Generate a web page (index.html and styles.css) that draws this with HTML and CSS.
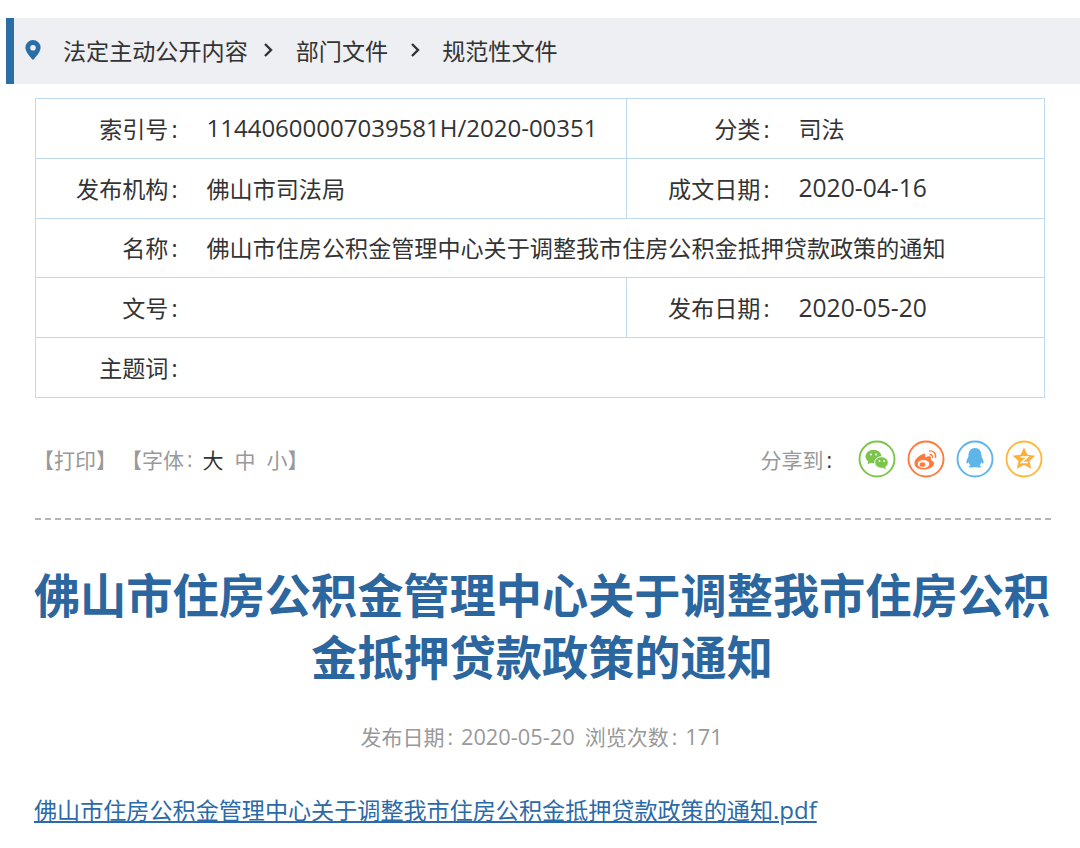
FILE: index.html
```html
<!DOCTYPE html>
<html lang="zh-CN">
<head>
<meta charset="utf-8">
<title>规范性文件</title>
<link rel="stylesheet" href="styles.css">
</head>
<body>
<nav class="crumb">
  <svg class="pin" viewBox="0 0 16 22" width="16" height="22"><path fill="#2b6ea6" fill-rule="evenodd" d="M8 1a7.6 7.6 0 0 0-7.6 7.6C.4 13 5 18 8 21c3-3 7.6-8 7.6-12.400A7.600 7.600 0 0 0 8 1zm0 5a2.800 2.800 0 1 1 0 5.600A2.800 2.800 0 0 1 8 6z"/></svg>
  <span class="crumb-a">法定主动公开内容</span>
  <svg class="chev chev-1" viewBox="0 0 10 16" width="10" height="16"><path d="M2 2l6 6-6 6" fill="none" stroke="#333" stroke-width="2.400"/></svg>
  <span class="crumb-b">部门文件</span>
  <svg class="chev chev-2" viewBox="0 0 10 16" width="10" height="16"><path d="M2 2l6 6-6 6" fill="none" stroke="#333" stroke-width="2.400"/></svg>
  <span class="crumb-c">规范性文件</span>
</nav>

<table class="meta">
  <colgroup><col class="c1"><col class="c2"><col class="c3"><col class="c4"></colgroup>
  <tr><th>索引号<i class="colon">:</i></th><td class="split num">11440600007039581H/2020-00351</td><th>分类<i class="colon">:</i></th><td>司法</td></tr>
  <tr><th>发布机构<i class="colon">:</i></th><td class="split">佛山市司法局</td><th>成文日期<i class="colon">:</i></th><td class="date">2020-04-16</td></tr>
  <tr><th>名称<i class="colon">:</i></th><td colspan="3">佛山市住房公积金管理中心关于调整我市住房公积金抵押贷款政策的通知</td></tr>
  <tr><th>文号<i class="colon">:</i></th><td class="split"></td><th>发布日期<i class="colon">:</i></th><td class="date">2020-05-20</td></tr>
  <tr><th>主题词<i class="colon">:</i></th><td colspan="3"></td></tr>
</table>

<div class="tools">
  <div class="print">【打印】<span class="gap"></span>【字体<i class="colon">:</i><b class="big">大</b><span class="sz">中</span><span class="sz">小</span>】</div>
  <div class="share">
    <span class="share-label">分享到<i class="colon dark">:</i></span>
    <svg class="ico" viewBox="0 0 38 38" width="38" height="38"><circle cx="19" cy="19" r="17.500" fill="#fff" stroke="#7cc54c" stroke-width="1.900"/><ellipse cx="15.500" cy="16.500" rx="8" ry="6.800" fill="#7cc54c"/><path d="M10.500 20.500l-1 4 4-2z" fill="#7cc54c"/><ellipse cx="23.500" cy="22.500" rx="6.800" ry="5.800" fill="#7cc54c" stroke="#fff" stroke-width="1"/><path d="M27 26.500l1 3-3.500-2z" fill="#7cc54c"/><circle cx="13" cy="14.500" r="1" fill="#fff"/><circle cx="18" cy="14.500" r="1" fill="#fff"/><circle cx="21.500" cy="21" r=".9" fill="#fff"/><circle cx="26" cy="21" r=".9" fill="#fff"/></svg>
    <svg class="ico" viewBox="0 0 38 38" width="38" height="38"><circle cx="19" cy="19" r="17.500" fill="#fff" stroke="#ff7a3d" stroke-width="1.900"/><path d="M16 14c-5 2-9 6-8.500 10 .5 4 5 5.500 9.500 5.500 5 0 10-2.500 10-6 0-2.500-2.500-3-3-3.500-.5-.5.500-2 0-3-1-1.500-4-.5-6 .5 .5-2 .5-5-2-3.500z" fill="#ff7a3d"/><ellipse cx="16.500" cy="24" rx="5.800" ry="4" fill="#fff"/><ellipse cx="15.500" cy="24.500" rx="2.800" ry="2.300" fill="#ff7a3d"/><path d="M22 11c4-.8 7.500 2.500 6.500 7M22.500 14.500c2-.3 3.500 1.200 3 3.300" fill="none" stroke="#ff7a3d" stroke-width="1.400"/></svg>
    <svg class="ico" viewBox="0 0 38 38" width="38" height="38"><circle cx="19" cy="19" r="17.500" fill="#fff" stroke="#5eb5ea" stroke-width="1.900"/><path d="M19 8c-4.500 0-6.500 3.500-6.500 7.500 0 1-.3 1.500-1 3-1 2-1.500 4.500-.8 5 .6.400 1.500-.8 1.900-1.500.3 1.500 1 2.500 2 3.300-1.200.5-2 1-1.600 1.700.5.800 4.500.7 6 .1 1.500.6 5.500.7 6-.1.400-.7-.4-1.200-1.600-1.700 1-.8 1.700-1.800 2-3.300.4.700 1.300 1.900 1.900 1.500.7-.5.200-3-.8-5-.7-1.500-1-2-1-3C25.500 11.500 23.500 8 19 8z" fill="#5eb5ea"/></svg>
    <svg class="ico" viewBox="0 0 38 38" width="38" height="38"><circle cx="19" cy="19" r="17.500" fill="#fff" stroke="#fdb93d" stroke-width="1.900"/><path d="M19 7.500l3.500 7.300 7.800.9-5.800 5.300 1.600 7.800-7.100-3.900-7.100 3.900 1.600-7.800-5.800-5.300 7.800-.9z" fill="#fbb03b"/><path d="M15.500 17h7l-6 5.500h6.500" fill="none" stroke="#fff" stroke-width="1.600"/></svg>
  </div>
</div>

<hr class="rule">

<h1 class="title">佛山市住房公积金管理中心关于调整我市住房公积金抵押贷款政策的通知</h1>
<p class="info">发布日期<i class="colon">:</i><span class="num">2020-05-20</span><span class="gap-sm"></span>浏览次数<i class="colon">:</i><span class="num">171</span></p>
<p class="attach"><a href="#">佛山市住房公积金管理中心关于调整我市住房公积金抵押贷款政策的通知<span class="num">.pdf</span></a></p>
</body>
</html>
```

FILE: styles.css
```css
* { box-sizing: border-box; }
html, body { margin: 0; padding: 0; background: #fff; overflow: hidden; }
body {
  height: 848px;
  font-family: "Open Sans", "Noto Sans CJK SC", sans-serif;
  color: #333;
}
.colon { font-style: normal; margin-left: 3px; }
.crumb {
  display: flex;
  align-items: center;
  height: 66px;
  margin: 18px 0 0 6px;
  padding: 0 0 2px 11px;
  background: #eeeff3;
  border-left: 8px solid #2b6ea6;
  font-size: 23.100px;
}
.pin { margin-top: -1px; }
.crumb-a { margin-left: 22px; }
.chev-1 { margin-left: 15px; }
.crumb-b { margin-left: 23px; }
.chev-2 { margin-left: 22px; }
.crumb-c { margin-left: 22px; }
.meta {
  width: 1010px;
  margin: 14px 0 0 35px;
  border-collapse: collapse;
  table-layout: fixed;
  font-size: 23.100px;
}
.c1 { width: 144px; }
.c2 { width: 447px; }
.c3 { width: 145px; }
.meta tr { height: 59.800px; }
.meta th, .meta td { border: 1px solid #bfd9ee; padding: 0 0 1px; border-left: 0; border-right: 0; font-weight: 400; }
.meta tr > :first-child { border-left: 1px solid #bfd9ee; }
.meta tr > :last-child { border-right: 1px solid #bfd9ee; }
.meta th { text-align: right; padding-right: 2px; }
.meta td { padding-left: 27px; white-space: nowrap; }
.meta td.split { border-right: 1px solid #bfd9ee; }
.meta td.num { font-size: 24px; }
.meta td.date { font-size: 24.600px; }
.tools {
  display: flex;
  justify-content: space-between;
  align-items: center;
  height: 44px;
  margin-top: 39px;
  padding: 0 37px 0 33px;
  font-size: 21px;
  color: #999;
}
.print { display: flex; align-items: center; white-space: nowrap; }
.gap { width: 4px; }
.big { font-weight: 400; color: #333; margin-left: 10px; }
.sz { margin-left: 11px; }
.share { display: flex; align-items: center; gap: 11px; }
.share-label { margin-right: 15px; }
.colon.dark { color: #333; }
.ico { display: block; }
.rule {
  margin: 37px 29px 0 35px;
  border: 0;
  border-top: 2px dashed #b4b4b4;
}
.title {
  width: 1030px;
  margin: 45px 0 0 27px;
  font-size: 46.200px;
  line-height: 62px;
  font-weight: 700;
  color: #2b669f;
  text-align: center;
}
.info {
  margin: 33px 0 0;
  padding-left: 3px;
  font-size: 21px;
  line-height: 30px;
  text-align: center;
  color: #999;
}
.info .num { font-size: 21.800px; }
.info .colon { margin-right: 8px; }
.gap-sm { display: inline-block; width: 10px; }
.attach {
  margin: 42px 0 0 34px;
  font-size: 23.100px;
  line-height: 32px;
}
.attach a { color: #2b6aa8; }
.attach .num { font-size: 24px; }
```
